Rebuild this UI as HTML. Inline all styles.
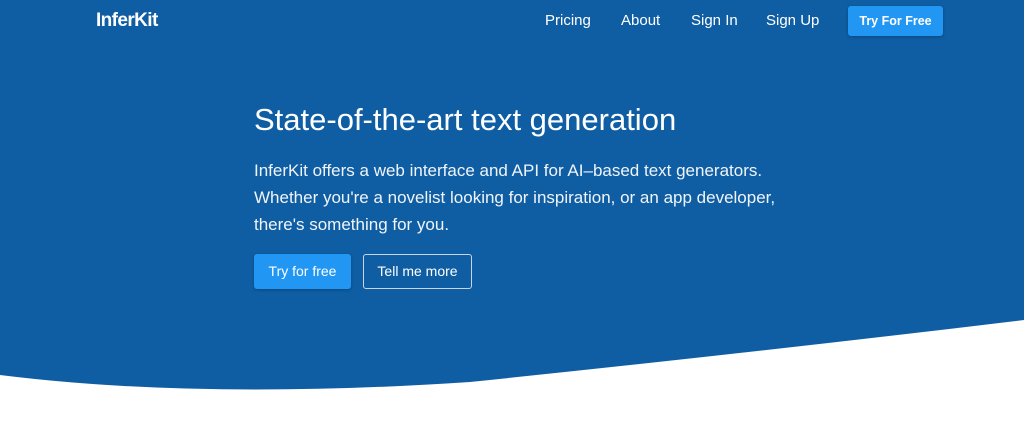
<!DOCTYPE html>
<html><head><meta charset="utf-8"><style>
*{margin:0;padding:0;box-sizing:border-box}
body{width:1024px;height:424px;overflow:hidden;background:#0f5ea4;font-family:"Liberation Sans",sans-serif;color:#fff;position:relative}
.logo{position:absolute;left:96px;top:10px;font-size:19px;font-weight:bold;letter-spacing:-0.6px}
.nav a{position:absolute;top:12px;font-size:15px;color:#fff;text-decoration:none}
.cta{position:absolute;left:848px;top:6px;width:95px;height:30px;background:#2196f3;border-radius:3px;font-size:12.5px;font-weight:bold;text-align:center;line-height:30px;box-shadow:0 1px 3px rgba(0,0,0,.25)}
h1{position:absolute;left:254px;top:102px;font-size:31px;font-weight:normal}
p{position:absolute;left:254px;top:157px;font-size:17px;line-height:27px;width:540px;color:#f0f4f8}
.b1{position:absolute;left:254px;top:254px;width:97px;height:35px;background:#2196f3;border-radius:3px;font-size:14px;text-align:center;line-height:35px;box-shadow:0 1px 3px rgba(0,0,0,.25)}
.b2{position:absolute;left:363px;top:254px;width:109px;height:35px;border:1px solid #c6d6e6;border-radius:3px;font-size:14px;text-align:center;line-height:33px}
svg{position:absolute;left:0;top:0}
</style></head><body>
<svg width="1024" height="424"><path d="M0,375 Q200,400 470,382 Q760,352 1024,320 L1024,424 L0,424 Z" fill="#fff"/></svg>
<div class="logo">InferKit</div>
<div class="nav"><a style="left:545px">Pricing</a><a style="left:621px">About</a><a style="left:691px">Sign In</a><a style="left:766px">Sign Up</a></div>
<div class="cta">Try For Free</div>
<h1>State-of-the-art text generation</h1>
<p>InferKit offers a web interface and API for AI–based text generators. Whether you're a novelist looking for inspiration, or an app developer, there's something for you.</p>
<div class="b1">Try for free</div>
<div class="b2">Tell me more</div>
</body></html>
